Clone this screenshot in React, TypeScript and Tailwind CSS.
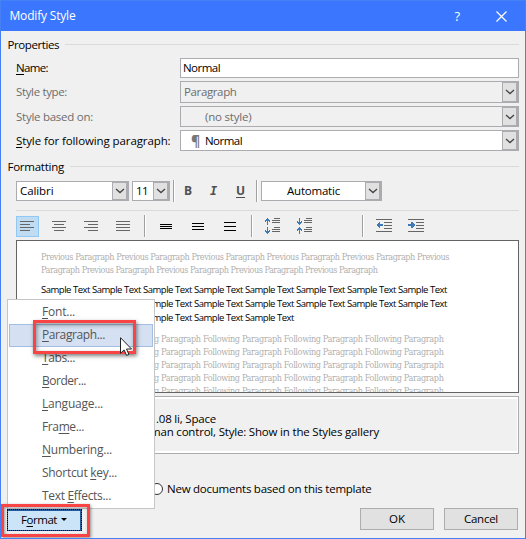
import { useLayoutEffect, useRef, useState } from "react";
import type { ReactNode } from "react";

/* Text with an optional "&" mnemonic, tracked so that it fills the width `w`. */
function Label({ text, w, className = "" }: { text: string; w: number; className?: string }) {
  const ref = useRef<HTMLSpanElement>(null);
  const [spacing, setSpacing] = useState(0);
  const plain = text.replace("&", "");
  useLayoutEffect(() => {
    if (ref.current) {
      const natural = ref.current.getBoundingClientRect().width - spacing * plain.length;
      setSpacing((w - natural) / plain.length);
    }
  }, [plain, w]);
  const i = text.indexOf("&");
  return (
    <span ref={ref} className={`inline-block shrink-0 whitespace-pre ${className}`} style={{ letterSpacing: `${spacing}px` }}>
      {i < 0 ? (
        text
      ) : (
        <>
          {text.slice(0, i)}
          <span className="underline underline-offset-2">{text[i + 1]}</span>
          {text.slice(i + 2)}
        </>
      )}
    </span>
  );
}

function DropButton() {
  return (
    <span className="flex h-full w-4 shrink-0 items-center justify-center border border-r-2 border-[#ababb0] bg-[#e1e1e1]">
      <svg width="10" height="6" viewBox="0 0 10 6" fill="none" stroke="#444" strokeWidth="1.3">
        <path d="M1 1l4 3.6L9 1" />
      </svg>
    </span>
  );
}

function Row({ label, w, dim, children }: { label: string; w: number; dim?: boolean; children: ReactNode }) {
  return (
    <div className={`flex items-center ${dim ? "text-[#6d6d6d]" : "text-black"}`}>
      <div className="flex w-[164px] shrink-0">
        <Label text={label} w={w} />
      </div>
      {children}
    </div>
  );
}

function Heading({ text, w }: { text: string; w: number }) {
  return (
    <div className="flex h-4 items-center gap-[6px] pr-1.5 pl-[6.5px]">
      <Label text={text} w={w} className="pt-0.5" />
      <span className="h-px flex-1 bg-[#dadada]" />
    </div>
  );
}

function Sep() {
  return <span className="h-[22px] w-0.5 shrink-0 border-r border-l border-r-white border-l-[#a0a0a0]" />;
}

/* Horizontal strokes given as [x, y, width]. */
function Lines({ rows, color, w, children }: { rows: number[][]; color: string; w: number; children?: ReactNode }) {
  return (
    <svg width={w} height="16" viewBox={`0 0 ${w} 16`} shapeRendering="crispEdges" className="shrink-0">
      {rows.map(([x, y, len], k) => (
        <rect key={k} x={x} y={y} width={len} height="1" fill={color} />
      ))}
      {children}
    </svg>
  );
}

const alignRows = [
  [[0, 3, 14], [0, 6, 10], [0, 9, 14], [0, 12, 10]],
  [[0, 3, 14], [2, 6, 10], [0, 9, 14], [2, 12, 10]],
  [[0, 3, 14], [4, 6, 10], [0, 9, 14], [4, 12, 10]],
  [[0, 3, 14], [0, 6, 14], [0, 9, 14], [0, 12, 14]],
];

const paraRows = [[9, 0, 6], [7, 2, 8], [7, 4, 8], [9, 9, 6], [7, 11, 8], [7, 13, 8]];

const menuItems: [string, number][] = [
  ["&Font...", 33],
  ["&Paragraph...", 63],
  ["&Tabs...", 33],
  ["&Border...", 44],
  ["&Language...", 61],
  ["Fra&me...", 42],
  ["&Numbering...", 70],
  ["Shortcut &key...", 75],
  ["Text &Effects...", 69],
];

const ARROW_UP = "M2 0h1v1h1v1h1v2h-1v-1h-1v4h-1v-4h-1v1h-1v-2h1v-1h1z";

export default function App() {
  return (
    <div className="relative flex h-[539px] w-[526px] flex-col overflow-hidden border border-[#4680f5] bg-[#f0f0f0] font-['Open_Sans','Noto_Sans',sans-serif] text-[11.5px] leading-[14px] text-black">
      <header className="flex h-[30px] shrink-0 items-center bg-[#3b76ff] pl-[8.5px] text-white">
        <Label text="Modify Style" w={66} className="text-[12px]" />
        <span className="ml-auto w-[6px] text-[13px]">?</span>
        <svg width="11" height="11" viewBox="0 0 11 11" stroke="white" strokeWidth="1.2" className="mr-[18px] ml-[35.5px]">
          <path d="M.5.5l10 10M10.5.5l-10 10" />
        </svg>
      </header>

      <div className="pt-[5px]">
        <Heading text="Properties" w={51.5} />
      </div>
      <div className="flex flex-col pt-[6px] pr-1.5 pl-[15px]">
        <Row label="&Name:" w={32}>
          <div className="flex h-5 flex-1 items-center border border-[#ababb0] bg-white pl-[2px]">
            <Label text="Normal" w={37} />
          </div>
        </Row>
        <div className="h-[3px]" />
        <Row label="Style type:" w={51} dim>
          <div className="flex h-[22px] flex-1 items-center justify-between border border-[#ababb0] pl-[3px]">
            <Label text="Paragraph" w={52.5} />
            <DropButton />
          </div>
        </Row>
        <div className="h-[3px]" />
        <Row label="Style based on:" w={77} dim>
          <div className="flex h-[21px] flex-1 items-center justify-between border border-[#ababb0] pl-6">
            <Label text="(no style)" w={46.5} />
            <DropButton />
          </div>
        </Row>
        <div className="h-[3px]" />
        <Row label="&Style for following paragraph:" w={154.5}>
          <div className="flex h-[21px] flex-1 items-center border border-[#ababb0] bg-white pl-2.5">
            <span className="w-[14px] text-[14px] font-bold text-[#777]">¶</span>
            <Label text="Normal" w={37} />
            <span className="ml-auto flex h-full">
              <DropButton />
            </span>
          </div>
        </Row>
      </div>

      <div className="pt-[7px]">
        <Heading text="Formatting" w={56.5} />
      </div>
      <div className="mt-[6px] flex h-[22px] shrink-0 items-center pl-[15px]">
        <div className="flex h-5 w-[113px] items-center justify-between border border-[#ababb0] bg-white pl-[3px]">
          <Label text="Calibri" w={33.5} />
          <DropButton />
        </div>
        <div className="ml-[3px] flex h-5 w-[38px] items-center justify-between border border-[#ababb0] bg-white pl-[3px]">
          <Label text="11" w={12} />
          <DropButton />
        </div>
        <span className="w-[3px]" />
        <Sep />
        <div className="flex flex-1 items-center text-[12px] font-bold text-[#505050]">
          <span className="ml-[9px] w-[26px]">B</span>
          <span className="w-[26px] font-['DejaVu_Sans_Mono',monospace] text-[12px] font-bold italic">I</span>
          <span className="w-5 underline underline-offset-2">U</span>
          <Sep />
          <div className="ml-[3px] flex h-5 w-[121px] items-center border border-[#ababb0] bg-white pl-[25px] text-[11.5px] font-normal text-black">
            <Label text="Automatic" w={53} />
            <span className="ml-auto flex h-full">
              <DropButton />
            </span>
          </div>
        </div>
      </div>
      <div className="mt-2 mr-1.5 ml-[15px] h-px shrink-0 bg-[#dadada]" />

      <div className="mt-1 flex h-[22px] shrink-0 items-center pl-[15px]">
        <div className="flex h-[21px] w-[23px] items-center border border-[#90c8f6] bg-[#c0dcf3] pl-[3px]">
          <Lines w={14} color="#666" rows={alignRows[0]} />
        </div>
        <div className="ml-[13px] flex gap-[18px]">
          {alignRows.slice(1).map((rows, k) => (
            <Lines key={k} w={14} color="#666" rows={rows} />
          ))}
        </div>
        <span className="w-[14px]" />
        <Sep />
        <div className="ml-[14px] flex gap-5">
          <Lines w={12} color="#000" rows={[[0, 6, 12], [0, 8, 12], [0, 10, 12]]} />
          <Lines w={12} color="#000" rows={[[0, 5, 12], [0, 8, 12], [0, 11, 12]]} />
          <Lines w={12} color="#000" rows={[[0, 4, 12], [0, 8, 12], [0, 12, 12]]} />
        </div>
        <span className="w-[15px]" />
        <Sep />
        <div className="ml-[12px] flex gap-4">
          <Lines w={16} color="#666" rows={paraRows}>
            <path d={ARROW_UP} fill="#3f7ab8" />
            <path d={ARROW_UP} fill="#3f7ab8" transform="translate(0 16) scale(1 -1)" />
          </Lines>
          <Lines w={16} color="#666" rows={paraRows}>
            <path d={ARROW_UP} fill="#3f7ab8" transform="translate(0 7) scale(1 -1)" />
            <path d={ARROW_UP} fill="#3f7ab8" transform="translate(0 9)" />
          </Lines>
        </div>
        <span className="w-[49px]" />
        <Sep />
        <div className="ml-3 flex gap-4">
          <Lines w={16} color="#666" rows={[[0, 1, 16], [8, 4, 8], [8, 7, 8], [8, 10, 8], [0, 13, 16]]}>
            <path d="M0 7l3-3h1v2h3v2H4v2H3z" fill="#3f7ab8" />
          </Lines>
          <Lines w={16} color="#666" rows={[[0, 1, 16], [8, 4, 8], [8, 7, 8], [8, 10, 8], [0, 13, 16]]}>
            <path d="M7 7L4 4H3v2H0v2h3v2h1z" fill="#3f7ab8" />
          </Lines>
        </div>
      </div>

      <div className="mt-[3px] mr-1.5 ml-[15px] flex h-[153px] shrink-0 flex-col overflow-hidden border border-[#646464] bg-white pt-[10px] pl-6">
        <div className="flex flex-col font-['DejaVu_Serif_Condensed','DejaVu_Serif',serif] text-[9px] leading-[13px] text-[#b0b0b0]">
          <Label text={"Previous Paragraph ".repeat(5) + "Previous"} w={408} className="self-start" />
          <Label text={"Paragraph" + " Previous Paragraph".repeat(4)} w={336.5} className="self-start" />
        </div>
        <div className="mt-[6px] flex flex-col text-[9.5px] leading-[14px] font-medium text-black">
          <Label text={"Sample Text ".repeat(8).trim()} w={406} className="self-start" />
          <Label text={"Sample Text ".repeat(8).trim()} w={406} className="self-start" />
          <Label text={"Sample Text ".repeat(5).trim()} w={253} className="self-start" />
        </div>
        <div className="mt-[8px] flex flex-col font-['DejaVu_Serif_Condensed','DejaVu_Serif',serif] text-[9px] leading-[13px] text-[#b0b0b0]">
          {[0, 1, 2, 3, 4].map((k) => (
            <Label key={k} text={"Following Paragraph ".repeat(5).trim()} w={402.5} className="self-start" />
          ))}
        </div>
      </div>

      <div className="mt-[3px] mr-1.5 ml-[15px] h-[58px] shrink-0 border border-[#ababb0] bg-white p-0.5 pr-px">
        <div className="flex h-full flex-col bg-[#f0f0f0] pt-[13px] leading-[13px]">
          <Label text=".08 li, Space" w={60} className="ml-[137px] self-start" />
          <Label text="man control, Style: Show in the Styles gallery" w={229} className="ml-[131px] self-start" />
        </div>
      </div>

      <div className="mt-7 flex h-[14px] shrink-0 items-center pl-[150px]">
        <span className="mr-1 size-3 rounded-full border border-[#333] bg-white" />
        <Label text="New documents based on this template" w={204.5} />
      </div>

      <footer className="mt-3 flex h-[23px] shrink-0 items-start pr-[7px] pl-1.5">
        <button className="mt-px flex h-[22px] w-[75px] items-center justify-center gap-1 border border-t-2 border-r-2 border-[#1f5f9f] bg-[#cce4f7] pb-0.5 outline-1 -outline-offset-1 outline-black outline-dotted">
          <Label text="F&ormat" w={36} />
          <span className="border-x-[3px] border-t-[3px] border-x-transparent border-t-black" />
        </button>
        <button className="ml-auto flex h-[22px] w-[74px] items-center justify-center border border-[#adadad] bg-[#e1e1e1]">
          <Label text="OK" w={16} />
        </button>
        <button className="ml-2.5 flex h-[22px] w-[74px] items-center justify-center border border-[#adadad] bg-[#e1e1e1]">
          <Label text="Cancel" w={34} />
        </button>
      </footer>

      {/* Format menu opened above its button */}
      <div className="absolute top-[298px] left-[6px] flex h-[210px] w-[148px] flex-col border border-[#c6c6c6] bg-white px-px pt-px text-[12px] text-[#555]">
        {menuItems.map(([text, w], k) => (
          <div
            key={text}
            className={`flex h-[23px] shrink-0 items-center border pb-px pl-8 ${k === 1 ? "border-[#a3bde3] bg-[#d5e1f2]" : "border-transparent"}`}
          >
            <Label text={text} w={w} />
          </div>
        ))}
      </div>

      {/* Highlight frames and pointer */}
      <div className="absolute top-[319px] left-[32px] h-[34px] w-[103px] border-[3px] border-[#f84444] shadow-[1px_2px_4px_rgba(0,0,0,0.5),inset_1px_2px_4px_rgba(0,0,0,0.4)]" />
      <div className="absolute top-[503px] left-0 h-[33px] w-[89px] border-[3px] border-[#f84444] shadow-[1px_1px_3px_rgba(0,0,0,0.4),inset_1px_1px_3px_rgba(0,0,0,0.35)]" />
      <svg className="absolute top-[336px] left-[119px]" width="13" height="20" viewBox="0 0 13 20" fill="white" stroke="#222" strokeWidth="1">
        <path d="M.5.7v15.6l3.6-3.4 2.4 5.5 2.4-1-2.4-5.4h5z" />
      </svg>
    </div>
  );
}
